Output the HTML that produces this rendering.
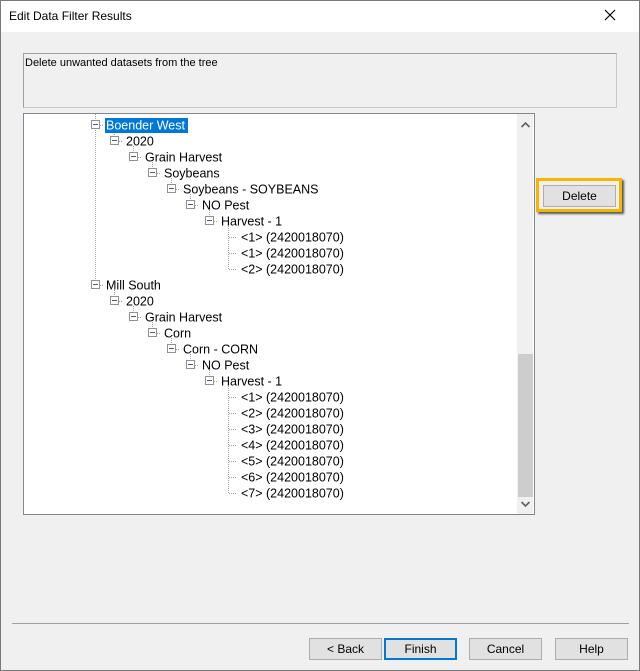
<!DOCTYPE html>
<html><head><meta charset="utf-8"><style>
body{margin:0;width:640px;height:671px;overflow:hidden;font-family:"Liberation Sans",sans-serif;font-size:12px;color:#000}
.win{position:absolute;left:0;top:0;width:638px;height:669px;border:1px solid #7a7a7a;background:#f0f0f0}
.title{position:absolute;left:0;top:0;width:638px;height:31px;background:#fff}
.abs{position:absolute}
.btn{position:absolute;top:637px;width:71px;height:20px;background:#e1e1e1;border:1px solid #adadad;text-align:center;line-height:20px}
</style></head><body>
<div class="win">
<div class="title"><span class="abs" style="left:8px;top:8px">Edit Data Filter Results</span>
<svg class="abs" style="left:603px;top:8px" width="12" height="12"><path d="M1 1L11 11M11 1L1 11" stroke="#000" stroke-width="1.2"/></svg></div>
<div class="abs" style="left:22px;top:52px;width:592px;height:53px;border:1px solid #c8c8c8;border-top-color:#a0a0a0;border-left-color:#a0a0a0"><span class="abs" style="left:1px;top:3px;font-size:11px">Delete unwanted datasets from the tree</span></div>
<div class="abs" style="left:22px;top:112px;width:510px;height:400px;border:1px solid #828790;background:#fff"></div>
<div class="abs" style="left:516px;top:113px;width:16px;height:400px;background:#f0f0f0"></div>
<div class="abs" style="left:517px;top:353px;width:15px;height:143px;background:#cdcdcd"></div>
<svg class="abs" style="left:516px;top:113px" width="17" height="400"><path d="M4.5 13L8.5 9L12.5 13" stroke="#606060" stroke-width="1.6" fill="none"/><path d="M4.5 388L8.5 392L12.5 388" stroke="#606060" stroke-width="1.6" fill="none"/></svg>
<svg class="abs" style="left:0;top:0" width="516" height="515" font-family="Liberation Sans, sans-serif" font-size="12.5">
<g stroke="#a0a0a0" stroke-dasharray="1 1" stroke-width="1">
<path d="M94.5 113V284M113.5 129V140M132.5 145V156M151.5 161V172M170.5 177V188M189.5 193V204M208.5 209V220M227.5 225V268"/>
<path d="M113.5 289V300M132.5 305V316M151.5 321V332M170.5 337V348M189.5 353V364M208.5 369V380M227.5 385V492"/>
<path d="M228 236.5H236M228 252.5H236M228 268.5H236"/>
<path d="M228 396.5H236M228 412.5H236M228 428.5H236M228 444.5H236M228 460.5H236M228 476.5H236M228 492.5H236"/>
</g>
<rect x="104" y="117" width="83" height="15" fill="#0078d7"/>
<g fill="#fff" stroke="#919191">
<rect x="90.5" y="119.5" width="8" height="8"/><rect x="109.5" y="135.5" width="8" height="8"/><rect x="128.5" y="151.5" width="8" height="8"/><rect x="147.5" y="167.5" width="8" height="8"/><rect x="166.5" y="183.5" width="8" height="8"/><rect x="185.5" y="199.5" width="8" height="8"/><rect x="204.5" y="215.5" width="8" height="8"/>
<rect x="90.5" y="279.5" width="8" height="8"/><rect x="109.5" y="295.5" width="8" height="8"/><rect x="128.5" y="311.5" width="8" height="8"/><rect x="147.5" y="327.5" width="8" height="8"/><rect x="166.5" y="343.5" width="8" height="8"/><rect x="185.5" y="359.5" width="8" height="8"/><rect x="204.5" y="375.5" width="8" height="8"/>
</g>
<g stroke="#3c5aa8"><path d="M92 123.5h5M111 139.5h5M130 155.5h5M149 171.5h5M168 187.5h5M187 203.5h5M206 219.5h5M92 283.5h5M111 299.5h5M130 315.5h5M149 331.5h5M168 347.5h5M187 363.5h5M206 379.5h5"/></g>
<g stroke="#a0a0a0" stroke-dasharray="1 1"><path d="M99 124.5h4M118 140.5h4M137 156.5h4M156 172.5h4M175 188.5h4M194 204.5h4M213 220.5h4M99 284.5h4M118 300.5h4M137 316.5h4M156 332.5h4M175 348.5h4M194 364.5h4M213 380.5h4"/></g>
<text x="105" y="128.5" fill="#fff">Boender West</text>
<text x="125" y="144.5">2020</text><text x="144" y="160.5">Grain Harvest</text><text x="163" y="176.5">Soybeans</text><text x="182" y="192.5">Soybeans - SOYBEANS</text><text x="201" y="208.5">NO Pest</text><text x="220" y="224.5">Harvest - 1</text>
<text x="240" y="240.5">&lt;1&gt; (2420018070)</text><text x="240" y="256.5">&lt;1&gt; (2420018070)</text><text x="240" y="272.5">&lt;2&gt; (2420018070)</text>
<text x="105" y="288.5">Mill South</text><text x="125" y="304.5">2020</text><text x="144" y="320.5">Grain Harvest</text><text x="163" y="336.5">Corn</text><text x="182" y="352.5">Corn - CORN</text><text x="201" y="368.5">NO Pest</text><text x="220" y="384.5">Harvest - 1</text>
<text x="240" y="400.5">&lt;1&gt; (2420018070)</text><text x="240" y="416.5">&lt;2&gt; (2420018070)</text><text x="240" y="432.5">&lt;3&gt; (2420018070)</text><text x="240" y="448.5">&lt;4&gt; (2420018070)</text><text x="240" y="464.5">&lt;5&gt; (2420018070)</text><text x="240" y="480.5">&lt;6&gt; (2420018070)</text><text x="240" y="496.5">&lt;7&gt; (2420018070)</text>
</svg>
<div class="abs" style="left:535px;top:177px;width:80px;height:28px;border:3px solid #f7b500;box-shadow:2px 2px 2px #555"></div>
<div class="abs" style="left:542px;top:184px;width:71px;height:20px;background:#e1e1e1;border:1px solid #adadad;text-align:center;line-height:20px">Delete</div>
<div class="abs" style="left:11px;top:622px;width:617px;height:1px;background:#a0a0a0"></div>
<div class="btn" style="left:308px">&lt; Back</div>
<div class="btn" style="left:383px;border:2px solid #0078d7;width:69px;height:18px;line-height:18px">Finish</div>
<div class="btn" style="left:468px">Cancel</div>
<div class="btn" style="left:554px">Help</div>
</div>
</body></html>
